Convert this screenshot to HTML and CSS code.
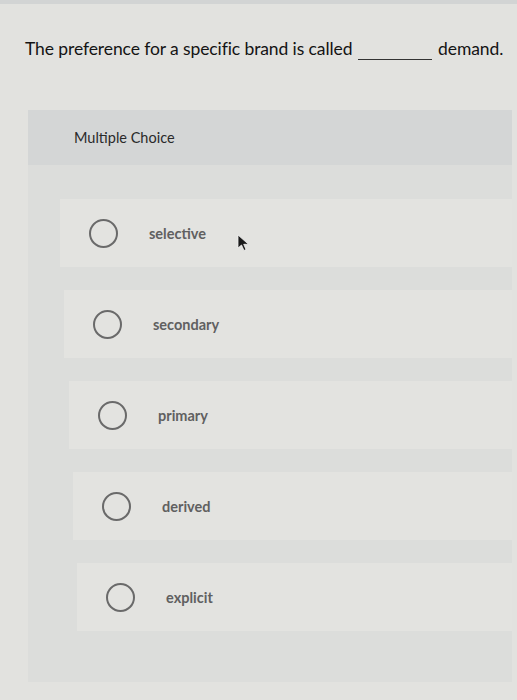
FILE: index.html
```html
<!DOCTYPE html>
<html lang="en">
<head>
<meta charset="utf-8">
<title>Multiple Choice</title>
<link rel="stylesheet" href="styles.css">
</head>
<body>
<div class="topbar"></div>
<p class="question">The preference for a specific brand is called <span class="blank"></span> demand.</p>
<section class="card">
  <div class="card-header">Multiple Choice</div>
  <div class="options">
    <label class="option"><span class="radio"></span><span class="label">selective</span></label>
    <label class="option"><span class="radio"></span><span class="label">secondary</span></label>
    <label class="option"><span class="radio"></span><span class="label">primary</span></label>
    <label class="option"><span class="radio"></span><span class="label">derived</span></label>
    <label class="option"><span class="radio"></span><span class="label">explicit</span></label>
  </div>
  <svg class="cursor" width="14" height="18" viewBox="0 0 14 18"><path d="M1 1 L1 14 L4.5 11 L7 16.5 L9 15.5 L6.7 10.3 L11.5 10.3 Z" fill="#1a1a1a" stroke="#f2f2f2" stroke-width="0.8"/></svg>
</section>
</body>
</html>
```
FILE: styles.css
```css
html, body {
  margin: 0;
  padding: 0;
}
body {
  background: #e2e2df;
  font-family: Lato, "Open Sans", "Liberation Sans", sans-serif;
  color: #222;
  width: 517px;
  height: 700px;
  overflow: hidden;
}
.topbar {
  height: 4px;
  background: #d2d4d4;
}
.question {
  margin: 35px 0 0 25px;
  font-size: 17.5px;
  line-height: 20px;
  color: #141414;
  letter-spacing: -0.1px;
}
.blank {
  display: inline-block;
  width: 74px;
  height: 16px;
  border-bottom: 1px solid #333;
  margin: 0 2px 0 1px;
  vertical-align: -5px;
}
.card {
  position: relative;
  margin: 50px 5px 0 28px;
  height: 572px;
  background: #dcdddb;
}
.card-header {
  height: 35px;
  padding: 20px 0 0 46px;
  background: #d4d6d6;
  font-size: 14.5px;
  line-height: 16px;
  color: #2a2a2a;
}
.options {
  display: flex;
  flex-direction: column;
  gap: 23px;
  padding: 34px 0 0 32px;
}
.option {
  display: flex;
  align-items: center;
  height: 68px;
  padding-left: 29px;
  background: #e3e3e0;
}
.option:nth-child(2) { margin-left: 4px; }
.option:nth-child(3) { margin-left: 9px; }
.option:nth-child(4) { margin-left: 13px; }
.option:nth-child(5) { margin-left: 17px; }
.radio {
  width: 25px;
  height: 25px;
  border: 2px solid #6a6a6a;
  border-radius: 50%;
  flex: none;
}
.label {
  margin-left: 31px;
  font-size: 14.5px;
  font-weight: 700;
  color: #606060;
}
.cursor {
  position: absolute;
  left: 209px;
  top: 124px;
}
```
